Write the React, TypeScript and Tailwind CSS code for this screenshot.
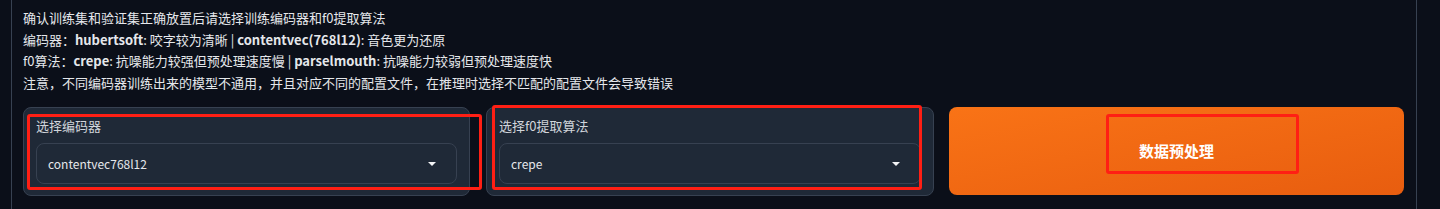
import React from 'react';

const font = { fontFamily: '"Noto Sans CJK SC", "Noto Sans", sans-serif' };

const Caret: React.FC = () => (
    <svg width="8" height="4" viewBox="0 0 8 4" className="fill-gray-100">
        <path d="M0 0h8L4 4z" />
    </svg>
);

const SelectBox: React.FC<{ label: string; value: string; width: string }> = ({ label, value, width }) => (
    <div className={`${width} shrink-0 rounded-lg border border-[#374151] bg-[#1f2937] px-3 pt-[9px] pb-[11px]`}>
        <div className="text-[13px] leading-[18px] text-[#d1d5db]">{label}</div>
        <div className="mt-[8px] flex h-[41px] items-center justify-between rounded-lg border border-[#374151] bg-[#1f2937] pl-[11px] pr-[20px]">
            <span className="text-[12px] text-[#e5e7eb]">{value}</span>
            <Caret />
        </div>
    </div>
);

export default function App() {
    return (
        <div className="relative h-[209px] w-[1440px] overflow-hidden bg-[#0b0f19]" style={font}>
            <div className="ml-[11px] mr-[23px] h-full border-x border-[#374151] pl-[11px] pr-[11px]">
                <div className="pt-[7px] text-[13px] leading-[21.5px] text-[#e5e7eb]">
                    <p>确认训练集和验证集正确放置后请选择训练编码器和f0提取算法</p>
                    <p>
                        编码器：<b>hubertsoft</b>: 咬字较为清晰 | <b>contentvec(768l12)</b>: 音色更为还原
                    </p>
                    <p>
                        f0算法：<b>crepe</b>: 抗噪能力较强但预处理速度慢 | <b>parselmouth</b>: 抗噪能力较弱但预处理速度快
                    </p>
                    <p>注意，不同编码器训练出来的模型不通用，并且对应不同的配置文件，在推理时选择不匹配的配置文件会导致错误</p>
                </div>
                <div className="mt-[14px] flex">
                    <SelectBox width="w-[447px]" label="选择编码器" value="contentvec768l12" />
                    <div className="w-[16px] shrink-0" />
                    <SelectBox width="w-[448px]" label="选择f0提取算法" value="crepe" />
                    <div className="w-[15px] shrink-0" />
                    <button className="h-[88px] w-[455px] shrink-0 rounded-lg bg-gradient-to-br from-[#f97316] to-[#e85d0f] text-[15px] font-bold text-white">
                        数据预处理
                    </button>
                </div>
            </div>

            {/* red annotation boxes */}
            <div className="pointer-events-none absolute left-[27px] top-[114px] h-[76px] w-[455px] rounded-[3px] border-[3px] border-[#ff1f14]" />
            <div className="pointer-events-none absolute left-[492px] top-[105px] h-[85px] w-[430px] rounded-[3px] border-[3px] border-[#ff1f14]" />
            <div className="pointer-events-none absolute left-[1106px] top-[114px] h-[60px] w-[193px] rounded-[3px] border-[3px] border-[#ff1f14]" />
        </div>
    );
}
